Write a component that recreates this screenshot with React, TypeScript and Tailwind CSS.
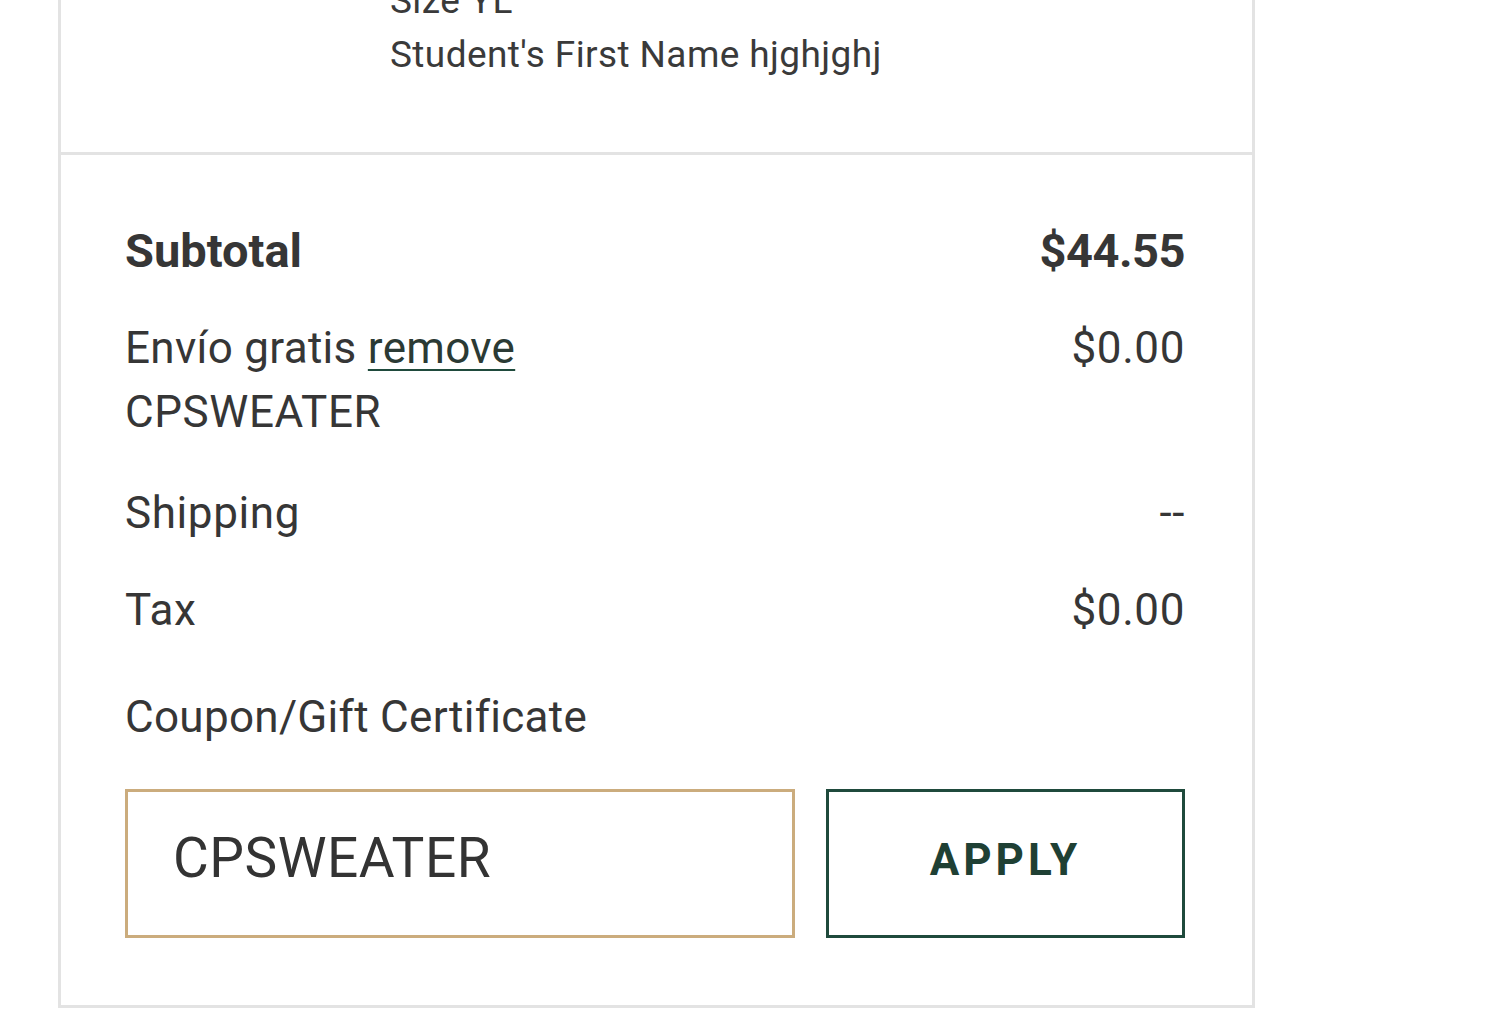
import React from "react";

export default function App() {
  const font = { fontFamily: "Roboto, 'Liberation Sans', sans-serif" };
  return (
    <div className="w-[1500px] h-[1017px] overflow-hidden bg-white text-[#363636]" style={font}>
      <div className="ml-[58px] w-[1197px] border-x-[3px] border-[#e3e3e3]">
        <div className="border-b-[3px] border-[#e3e3e3] pl-[329px] pb-[70px] -mt-[26px] pt-0">
          <div className="text-[37px] leading-[54px] tracking-[0.4px] text-[#3a3a3a]">Size YL</div>
          <div className="text-[37px] leading-[54px] tracking-[0.4px] text-[#3a3a3a]">Student's First Name hjghjghj</div>
        </div>
        <div className="pl-[64px] pr-[67px] pt-[64px] pb-[67px] border-b-[3px] border-[#e3e3e3]">
          <div className="flex justify-between text-[47px] leading-[64px] font-bold">
            <span>Subtotal</span>
            <span className="tracking-[-0.5px]">$44.55</span>
          </div>
          <div className="mt-[33px] flex justify-between text-[44px] leading-[64px] tracking-[0.3px]">
            <div>
              <div>
                Envío gratis{" "}
                <a className="underline decoration-[#1f4a3c] decoration-[2px] underline-offset-[6px] text-[#2b3a34]">remove</a>
              </div>
              <div className="tracking-[0.6px]">CPSWEATER</div>
            </div>
            <span className="tracking-[0.6px]">$0.00</span>
          </div>
          <div className="mt-[37px] flex justify-between text-[44px] leading-[64px] tracking-[0.6px]">
            <span>Shipping</span>
            <span>--</span>
          </div>
          <div className="mt-[33px] flex justify-between text-[44px] leading-[64px] tracking-[0.6px]">
            <span>Tax</span>
            <span>$0.00</span>
          </div>
          <div className="mt-[43px] text-[44px] leading-[64px] tracking-[0.3px]">Coupon/Gift Certificate</div>
          <div className="mt-[40px] flex gap-[31px]">
            <div className="w-[670px] h-[149px] border-[3px] border-[#cbac7d] flex items-center pl-[45px] pb-[10px] text-[55px] tracking-[0.5px] text-[#333]">
              CPSWEATER
            </div>
            <button className="flex-1 h-[149px] border-[3px] border-[#1f4a3c] flex items-center justify-center pb-[8px] text-[44px] font-bold tracking-[4px] text-[#1f4034]">
              APPLY
            </button>
          </div>
        </div>
      </div>
    </div>
  );
}
